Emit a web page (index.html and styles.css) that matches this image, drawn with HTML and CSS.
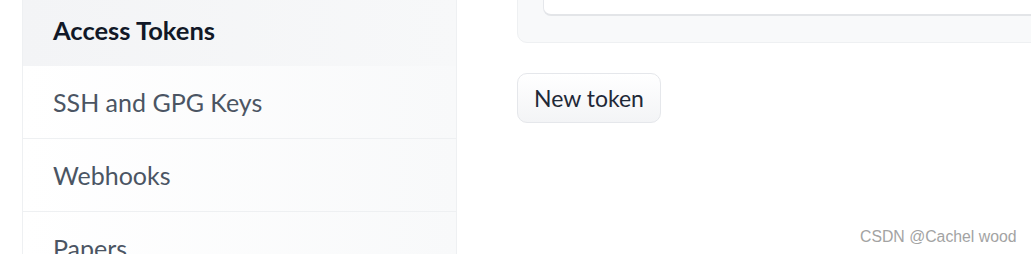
FILE: index.html
```html
<!DOCTYPE html>
<html>
<head>
<meta charset="utf-8">
<link rel="stylesheet" href="styles.css">
</head>
<body>
<div class="page">
  <nav class="sidebar">
    <a class="item active">Access Tokens</a>
    <a class="item">SSH and GPG Keys</a>
    <a class="item">Webhooks</a>
    <a class="item">Papers</a>
  </nav>
  <main class="content">
    <div class="card">
      <div class="inner"></div>
    </div>
    <button class="btn">New token</button>
  </main>
</div>
<div class="watermark">CSDN @Cachel wood</div>
</body>
</html>
```
FILE: styles.css
```css
html, body {
  margin: 0;
  padding: 0;
  background: #ffffff;
  overflow: hidden;
  height: 254px;
}
.page {
  display: flex;
  align-items: flex-start;
  margin-top: -7px;
  padding-left: 22px;
  gap: 60px;
  font-family: Lato, "Noto Sans", sans-serif;
}
.sidebar {
  width: 433px;
  flex-shrink: 0;
  display: flex;
  flex-direction: column;
  border-left: 1px solid #eef0f2;
  border-right: 1px solid #eef0f2;
  background: linear-gradient(to right, #ffffff, #f8f9fa);
}
.item {
  height: 72px;
  display: flex;
  align-items: center;
  padding-left: 30px;
  font-size: 25px;
  color: #4b5563;
  border-bottom: 1px solid #eef0f2;
}
.item.active {
  height: 73px;
  border-bottom: none;
  font-weight: 700;
  font-size: 25.5px;
  color: #111827;
  background: linear-gradient(to right, #f3f4f6, #f7f8f9);
}
.content {
  flex: 1;
  min-width: 0;
  display: flex;
  flex-direction: column;
  align-items: flex-start;
}
.card {
  align-self: stretch;
  margin-right: -40px;
  margin-top: -20px;
  height: 70px;
  padding: 0 0 26px 25px;
  background: #f8f9fa;
  border: 1px solid #eef0f2;
  border-radius: 10px;
  box-sizing: border-box;
  display: flex;
}
.inner {
  flex: 1;
  background: #ffffff;
  border: 1px solid #e5e7eb;
  border-bottom: 2px solid #e3e5e8;
  border-radius: 8px;
}
.btn {
  margin-top: 30px;
  height: 50px;
  padding: 0 16px;
  font-family: Lato, "Noto Sans", sans-serif;
  font-size: 23px;
  color: #1f2937;
  background: linear-gradient(to bottom, #ffffff, #f3f4f6);
  border: 1px solid #e5e7eb;
  border-radius: 10px;
}
.watermark {
  position: absolute;
  left: 860px;
  top: 228px;
  font-family: "Liberation Sans", Arial, sans-serif;
  font-size: 15.8px;
  color: #a3a3a3;
}
```
